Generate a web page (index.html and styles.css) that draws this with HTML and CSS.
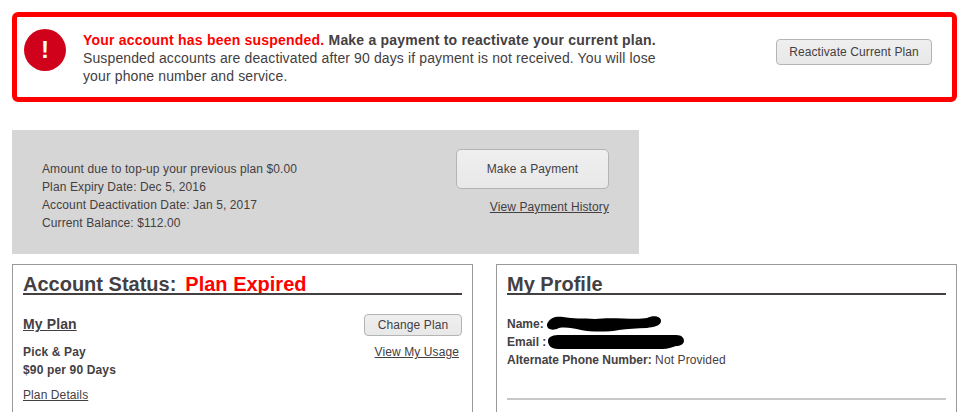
FILE: index.html
```html
<!DOCTYPE html>
<html lang="en">
<head>
<meta charset="utf-8">
<title>Account</title>
<link rel="stylesheet" href="styles.css">
</head>
<body>
<div class="page">
  <section class="alert">
    <div class="alert-icon">!</div>
    <div class="alert-text">
      <p class="alert-head"><span class="red">Your account has been suspended.</span> Make a payment to reactivate your current plan.</p>
      <p>Suspended accounts are deactivated after 90 days if payment is not received. You will lose your phone number and service.</p>
    </div>
    <button class="btn btn-reactivate">Reactivate Current Plan</button>
  </section>

  <section class="due">
    <div class="due-info">
      <div>Amount due to top-up your previous plan $0.00</div>
      <div>Plan Expiry Date: Dec 5, 2016</div>
      <div>Account Deactivation Date: Jan 5, 2017</div>
      <div>Current Balance: $112.00</div>
    </div>
    <div class="due-actions">
      <button class="btn btn-pay">Make a Payment</button>
      <a href="#" class="link">View Payment History</a>
    </div>
  </section>

  <div class="panels">
    <section class="panel">
      <h2 class="panel-title">Account Status:<span class="status">Plan Expired</span></h2>
      <div class="plan">
        <div class="plan-info">
          <a href="#" class="plan-name">My Plan</a>
          <div class="plan-bold">Pick &amp; Pay</div>
          <div class="plan-bold">$90 per 90 Days</div>
          <a href="#" class="link plan-details">Plan Details</a>
        </div>
        <div class="plan-actions">
          <button class="btn btn-change">Change Plan</button>
          <a href="#" class="link usage">View My Usage</a>
        </div>
      </div>
    </section>
    <section class="panel">
      <h2 class="panel-title">My Profile</h2>
      <div class="profile">
        <div class="profile-row"><b>Name:</b><svg class="blob blob-name" viewBox="0 0 114 16" aria-hidden="true"><path d="M0 8 C3 1 10 0 16 1 C26 3 36 2 48 3 C64 1 90 4 100 2 C106 -1 114 0 114 5 C114 10 106 11 100 12 C90 12 80 13 72 14 C62 16 44 16 34 14 C26 12 18 11 12 12 C6 15 -1 14 0 8Z"/></svg></div>
        <div class="profile-row"><b>Email :</b><svg class="blob blob-email" viewBox="0 0 138 16" aria-hidden="true"><path d="M2 7 C2 2 8 1 14 1 L130 1 C136 1 138 4 138 7 C138 10 134 12 130 12 C126 13 122 15 116 15 L12 15 C6 15 2 12 2 7Z"/></svg></div>
        <div class="profile-row"><b>Alternate Phone Number:</b><span class="plain"> Not Provided</span></div>
      </div>
      <hr class="rule">
    </section>
  </div>
</div>
</body>
</html>
```

FILE: styles.css
```css
* { box-sizing: border-box; }
html, body { margin: 0; height: 412px; overflow: hidden; background: #fff; }
body { font-family: "Liberation Sans", Arial, sans-serif; font-size: 12px; color: #444042; }
p { margin: 0; }
a { color: #444042; }

.page { padding: 12px 14px 0 12px; width: 971px; }

.alert {
  height: 90px;
  border: 5px solid #ff0000;
  border-radius: 6px;
  display: flex;
  align-items: flex-start;
  padding: 12px 20px 0 7px;
}
.alert-icon {
  flex: none;
  width: 42px;
  height: 42px;
  border-radius: 50%;
  background: #d0021b;
  color: #fff;
  font: bold 24px/42px "Liberation Sans", sans-serif;
  text-align: center;
}
.alert-text {
  width: 590px;
  margin-left: 17px;
  font-size: 14px;
  line-height: 18px;
  letter-spacing: .12px;
  padding-top: 2px;
}
.alert-head { font-weight: bold; letter-spacing: .21px; }
.red { color: #ff0000; }

.btn {
  font-family: inherit;
  color: #444042;
  background: linear-gradient(#f0efef, #e9e8e8);
  border: 1px solid #b4b4b4;
  border-radius: 4px;
  padding: 0;
  display: block;
  letter-spacing: .1px;
}
.btn-reactivate { width: 156px; height: 26px; font-size: 12px; margin: 10px 0 0 auto; }

.due {
  margin-top: 28px;
  width: 627px;
  height: 124px;
  background: #d6d6d6;
  display: flex;
  justify-content: space-between;
  padding: 19px 30px 0;
}
.due-info { line-height: 18px; padding-top: 11px; letter-spacing: .11px; }
.due-actions { display: flex; flex-direction: column; align-items: flex-end; }
.btn-pay { width: 153px; height: 40px; font-size: 12px; border-radius: 5px; }
.link { font-size: 12px; line-height: 18px; letter-spacing: .1px; }
.due-actions .link { margin-top: 9px; }

.panels { margin-top: 10px; display: flex; gap: 23px; }
.panel {
  width: 461px;
  height: 200px;
  border: 1px solid #999;
  padding: 0 10px;
}
.panel-title {
  margin: 0;
  height: 30px;
  border-bottom: 2px solid #444042;
  font-size: 20px;
  line-height: 38px;
  font-weight: bold;
  overflow: hidden;
}
.status { color: #ff0000; margin-left: 9px; }

.plan { display: flex; justify-content: space-between; padding-top: 19px; }
.plan-name { display: block; font-size: 14px; font-weight: bold; line-height: 18px; letter-spacing: .12px; margin-top: 1px; margin-bottom: 10px; }
.plan-bold { font-weight: bold; line-height: 18px; letter-spacing: .15px; }
.plan-details { display: block; margin-top: 7px; }
.plan-actions { display: flex; flex-direction: column; align-items: flex-end; }
.btn-change { width: 98px; height: 22px; font-size: 12px; }
.usage { margin: 7px 3px 0 0; }

.profile { padding-top: 20px; line-height: 18px; }
.profile-row { display: flex; align-items: center; height: 18px; white-space: pre; }
.plain { letter-spacing: .1px; }
.blob { display: block; height: 16px; fill: #000; }
.blob-name { width: 114px; margin-left: 3px; }
.blob-email { width: 138px; }
.rule { margin: 29px 0 0; height: 2px; border: 0; background: #c8c8c8; }
```
